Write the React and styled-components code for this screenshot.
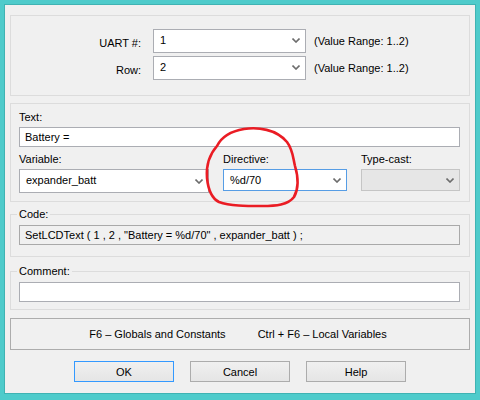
import React from 'react';
import styled, { createGlobalStyle } from 'styled-components';

const GlobalStyle = createGlobalStyle`
  html, body {
    margin: 0;
    padding: 0;
  }
  body {
    font-family: "Liberation Sans", Arial, sans-serif;
    font-size: 11px;
    color: #000;
  }
`;

const Frame = styled.div`
  width: 480px;
  height: 400px;
  box-sizing: border-box;
  padding: 4px;
  background: #4ecbcb;
`;

const Dialog = styled.div`
  position: relative;
  width: 472px;
  height: 390px;
  box-sizing: border-box;
  border: 1px solid #3fb3b3;
  background: #f0f0f0;
  padding: 10px 5px 0 5px;
  display: flex;
  flex-direction: column;
`;

const Group = styled.div`
  position: relative;
  box-sizing: border-box;
  width: 460px;
  height: ${(p) => p.$h}px;
  margin-top: ${(p) => p.$mt || 0}px;
  border: 1px solid #dcdcdc;
  padding: ${(p) => p.$pad};
`;

const Legend = styled.span`
  position: absolute;
  top: -8px;
  left: 6px;
  padding: 0 2px;
  line-height: 14px;
  background: #f0f0f0;
`;

const PortGrid = styled.div`
  display: grid;
  grid-template-columns: 130px 153px auto;
  column-gap: 12px;
  row-gap: 3px;
  align-items: center;
`;

const PortLabel = styled.span`
  text-align: right;
  padding-top: 3px;
`;

const RangeNote = styled.span`
  margin-left: -4px;
  padding-bottom: 1px;
`;

const Combo = styled.div`
  box-sizing: border-box;
  width: ${(p) => p.$w}px;
  height: ${(p) => p.$h || 24}px;
  display: flex;
  align-items: flex-start;
  justify-content: space-between;
  padding: 3px 5px 0 6px;
  line-height: 14px;
  background: ${(p) => (p.$disabled ? '#e6e6e6' : '#fff')};
  border: 1px solid ${(p) => (p.$focus ? '#569de5' : p.$disabled ? '#c5c5c5' : '#abadb3')};
`;

const Chevron = styled.svg`
  flex: none;
  margin-top: ${(p) => p.$mt || 5}px;
`;

const FieldLabel = styled.div`
  line-height: 14px;
  margin-bottom: 3px;
`;

const TextBox = styled.div`
  box-sizing: border-box;
  width: 441px;
  height: 20px;
  padding: 0 5px;
  line-height: 18px;
  background: ${(p) => (p.$readonly ? '#f0f0f0' : '#fff')};
  border: 1px solid ${(p) => (p.$readonly ? '#a9a9a9' : '#abadb3')};
  white-space: nowrap;
`;

const SelectRow = styled.div`
  display: flex;
  gap: 14px;
  margin-top: 5px;
`;

const Column = styled.div`
  display: flex;
  flex-direction: column;
`;

const HintBox = styled.div`
  box-sizing: border-box;
  width: 460px;
  height: 32px;
  margin-top: 8px;
  border: 1px solid #acacac;
  display: flex;
  align-items: center;
  justify-content: center;
  gap: 32px;
  padding-right: 4px;
`;

const ButtonRow = styled.div`
  width: 460px;
  margin-top: 11px;
  display: flex;
  justify-content: center;
  gap: 16px;
`;

const Button = styled.button`
  box-sizing: border-box;
  width: 100px;
  height: 21px;
  padding: 0;
  font: inherit;
  color: #000;
  background: linear-gradient(#f0f0f0, #e5e5e5);
  border: 1px solid ${(p) => (p.$primary ? '#3399ff' : '#acacac')};
`;

const Annotation = styled.svg`
  position: absolute;
  left: -5px;
  top: -5px;
  pointer-events: none;
`;

const ArrowIcon = ({ mt }) => (
  <Chevron $mt={mt} width="8" height="5" viewBox="0 0 8 5">
    <polyline points="0.5,0.5 4,4 7.5,0.5" fill="none" stroke="#6d6d6d" strokeWidth="1.6" />
  </Chevron>
);

const App = () => (
  <>
    <GlobalStyle />
    <Frame>
      <Dialog>
        {/* port / row */}
        <Group $h={81} $pad="13px 0 0 0">
          <PortGrid>
            <PortLabel>UART #:</PortLabel>
            <Combo $w={153}>
              <span>1</span>
              <ArrowIcon />
            </Combo>
            <RangeNote>(Value Range: 1..2)</RangeNote>
            <PortLabel>Row:</PortLabel>
            <Combo $w={153}>
              <span>2</span>
              <ArrowIcon />
            </Combo>
            <RangeNote>(Value Range: 1..2)</RangeNote>
          </PortGrid>
        </Group>

        {/* text + variable */}
        <Group $h={99} $mt={7} $pad="6px 0 0 8px">
          <FieldLabel>Text:</FieldLabel>
          <TextBox>Battery =</TextBox>
          <SelectRow>
            <Column>
              <FieldLabel>Variable:</FieldLabel>
              <Combo $w={190}>
                <span>expander_batt</span>
                <ArrowIcon mt={6} />
              </Combo>
            </Column>
            <Column>
              <FieldLabel>Directive:</FieldLabel>
              <Combo $w={124} $h={22} $focus>
                <span>%d/70</span>
                <ArrowIcon />
              </Combo>
            </Column>
            <Column>
              <FieldLabel>Type-cast:</FieldLabel>
              <Combo $w={99} $h={22} $disabled>
                <span />
                <ArrowIcon />
              </Combo>
            </Column>
          </SelectRow>
        </Group>

        <Group $h={43} $mt={12} $pad="10px 0 0 8px">
          <Legend>Code:</Legend>
          <TextBox $readonly>SetLCDText ( 1 , 2 , "Battery = %d/70" , expander_batt ) ;</TextBox>
        </Group>

        <Group $h={39} $mt={14} $pad="10px 0 0 8px">
          <Legend>Comment:</Legend>
          <TextBox />
        </Group>

        <HintBox>
          <span>F6 – Globals and Constants</span>
          <span>Ctrl + F6 – Local Variables</span>
        </HintBox>

        <ButtonRow>
          <Button $primary>OK</Button>
          <Button>Cancel</Button>
          <Button>Help</Button>
        </ButtonRow>

        {/* hand-drawn highlight around Directive */}
        <Annotation width="480" height="400" viewBox="0 0 480 400">
          <path
            d="M217 146 C222 136 232 131 244 129 C258 127 276 129 287 142 C293 150 293 158 295 166 C298 176 299 188 294 197 C288 205 276 206 262 206 C246 206 230 206 219 202 C211 198 208 188 207 178 C206 166 209 155 217 146"
            fill="none"
            stroke="#ea1c24"
            strokeWidth="2.6"
            strokeLinecap="round"
          />
        </Annotation>
      </Dialog>
    </Frame>
  </>
);

export default App;
